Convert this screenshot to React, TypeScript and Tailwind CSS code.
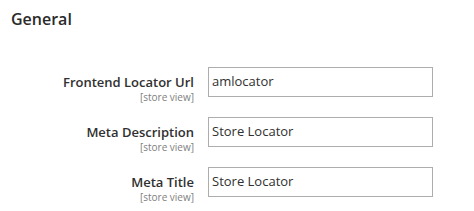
import React from 'react';

const fields = [
  { label: 'Frontend Locator Url', value: 'amlocator' },
  { label: 'Meta Description', value: 'Store Locator' },
  { label: 'Meta Title', value: 'Store Locator' },
];

export default function App() {
  return (
    <div className="w-[474px] h-[211px] bg-white font-['Open_Sans',sans-serif] text-[#303030] overflow-hidden">
      <h2 className="pl-[11px] pt-[9px] text-[16px] font-semibold leading-[20px] text-[#2a2a2a]">General</h2>
      <div className="mt-[38px] flex flex-col gap-[20px]">
        {fields.map((f) => (
          <div key={f.label} className="flex items-start h-[30px]">
            <div className="w-[194px] text-right">
              <div className="pt-[7px] text-[13px] font-semibold leading-[17px] text-[#303030]">{f.label}</div>
              <div className="text-[10px] leading-[12px] text-[#808080]">[store view]</div>
            </div>
            <div className="ml-[14px] w-[225px] h-[30px] border border-[#adadad] flex items-center pl-[3px] text-[13px] text-[#303030]">
              {f.value}
            </div>
          </div>
        ))}
      </div>
    </div>
  );
}
